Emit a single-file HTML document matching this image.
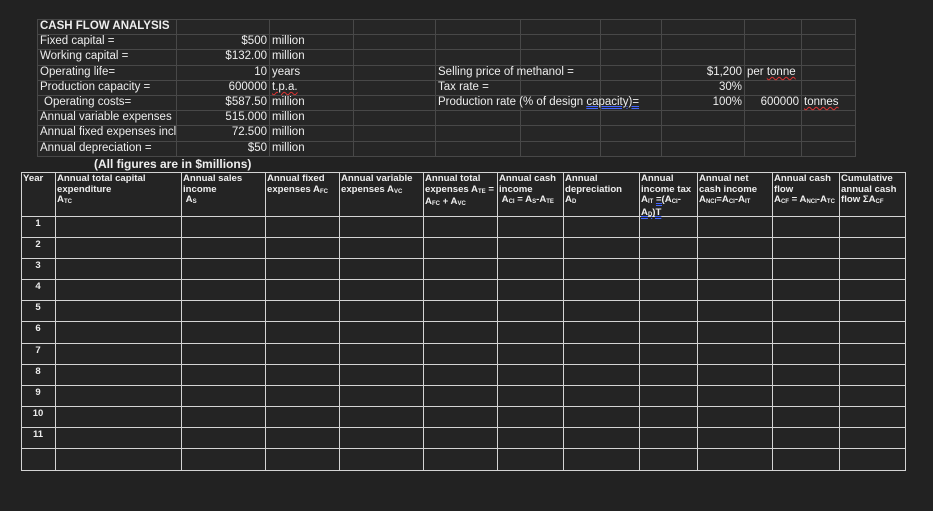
<!DOCTYPE html>
<html><head><meta charset="utf-8"><style>
body{margin:0;width:933px;height:511px;background:#222;position:relative;overflow:hidden;font-family:"Liberation Sans",Arial,sans-serif;color:#eee}
.v,.h{position:absolute;background:#484848}
.V,.H{position:absolute;background:#d4d4d4}
.t{position:absolute;font-size:11.5px;line-height:15px;white-space:nowrap}
.r{text-align:right}
.c{position:absolute;font-size:9.6px;line-height:10.5px;font-weight:bold;color:#eee;white-space:nowrap}
.n{position:absolute;font-size:9.5px;font-weight:bold;width:34px;text-align:center;left:21px}
sub{font-size:6px;vertical-align:-1px}
.u{text-decoration:underline wavy #d33;text-decoration-thickness:1px}
.b{text-decoration:underline double #46f}
</style></head><body>
<!-- top grid -->
<div style="position:absolute;left:37px;top:19px;width:818px;height:137px;background:#262626"></div>
<div class="v" style="left:37px;top:19px;width:1px;height:137px"></div>
<div class="v" style="left:176px;top:19px;width:1px;height:137px"></div>
<div class="v" style="left:269px;top:19px;width:1px;height:137px"></div>
<div class="v" style="left:353px;top:19px;width:1px;height:137px"></div>
<div class="v" style="left:435px;top:19px;width:1px;height:137px"></div>
<div class="v" style="left:520px;top:19px;width:1px;height:137px"></div>
<div class="v" style="left:600px;top:19px;width:1px;height:137px"></div>
<div class="v" style="left:661px;top:19px;width:1px;height:137px"></div>
<div class="v" style="left:744px;top:19px;width:1px;height:137px"></div>
<div class="v" style="left:801px;top:19px;width:1px;height:137px"></div>
<div class="v" style="left:855px;top:19px;width:1px;height:137px"></div>
<div class="h" style="left:37px;top:19px;width:819px;height:1px"></div>
<div class="h" style="left:37px;top:34px;width:819px;height:1px"></div>
<div class="h" style="left:37px;top:49px;width:819px;height:1px"></div>
<div class="h" style="left:37px;top:65px;width:819px;height:1px"></div>
<div class="h" style="left:37px;top:80px;width:819px;height:1px"></div>
<div class="h" style="left:37px;top:95px;width:819px;height:1px"></div>
<div class="h" style="left:37px;top:110px;width:819px;height:1px"></div>
<div class="h" style="left:37px;top:125px;width:819px;height:1px"></div>
<div class="h" style="left:37px;top:141px;width:819px;height:1px"></div>
<div class="h" style="left:37px;top:156px;width:819px;height:1px"></div>

<div class="t" style="left:40px;top:19px;font-weight:bold">CASH FLOW ANALYSIS</div>
<div class="t" style="left:40px;top:34px">Fixed capital =</div>
<div class="t" style="left:40px;top:49px">Working capital =</div>
<div class="t" style="left:40px;top:65px">Operating life=</div>
<div class="t" style="left:40px;top:80px">Production capacity =</div>
<div class="t" style="left:44px;top:95px">Operating costs=</div>
<div class="t" style="left:40px;top:110px">Annual variable expenses</div>
<div class="t" style="left:40px;top:125px">Annual fixed expenses incl</div>
<div class="t" style="left:40px;top:141px">Annual depreciation =</div>

<div class="t r" style="left:176px;width:91px;top:34px">$500</div>
<div class="t r" style="left:176px;width:91px;top:49px">$132.00</div>
<div class="t r" style="left:176px;width:91px;top:65px">10</div>
<div class="t r" style="left:176px;width:91px;top:80px">600000</div>
<div class="t r" style="left:176px;width:91px;top:95px">$587.50</div>
<div class="t r" style="left:176px;width:91px;top:110px">515.000</div>
<div class="t r" style="left:176px;width:91px;top:125px">72.500</div>
<div class="t r" style="left:176px;width:91px;top:141px">$50</div>

<div class="t" style="left:272px;top:34px">million</div>
<div class="t" style="left:272px;top:49px">million</div>
<div class="t" style="left:272px;top:65px">years</div>
<div class="t" style="left:272px;top:80px"><span class="u">t.p.a.</span></div>
<div class="t" style="left:272px;top:95px">million</div>
<div class="t" style="left:272px;top:110px">million</div>
<div class="t" style="left:272px;top:125px">million</div>
<div class="t" style="left:272px;top:141px">million</div>

<div class="t" style="left:438px;top:65px">Selling price of methanol =</div>
<div class="t" style="left:438px;top:80px">Tax rate =</div>
<div class="t" style="left:438px;top:95px">Production rate (% of design <span class="b">capacity)=</span></div>
<div class="t r" style="left:661px;width:81px;top:65px">$1,200</div>
<div class="t r" style="left:661px;width:81px;top:80px">30%</div>
<div class="t r" style="left:661px;width:81px;top:95px">100%</div>
<div class="t" style="left:747px;top:65px">per <span class="u">tonne</span></div>
<div class="t r" style="left:744px;width:55px;top:95px">600000</div>
<div class="t" style="left:804px;top:95px"><span class="u">tonnes</span></div>

<div class="t" style="left:94px;top:157px;font-weight:bold;font-size:12px">(All figures are in $millions)</div>

<!-- lower table -->
<div style="position:absolute;left:21px;top:172px;width:884px;height:298px;background:#242424"></div>
<div class="V" style="left:21px;top:172px;width:1px;height:299px"></div>
<div class="V" style="left:55px;top:172px;width:1px;height:299px"></div>
<div class="V" style="left:181px;top:172px;width:1px;height:299px"></div>
<div class="V" style="left:265px;top:172px;width:1px;height:299px"></div>
<div class="V" style="left:339px;top:172px;width:1px;height:299px"></div>
<div class="V" style="left:423px;top:172px;width:1px;height:299px"></div>
<div class="V" style="left:497px;top:172px;width:1px;height:299px"></div>
<div class="V" style="left:563px;top:172px;width:1px;height:299px"></div>
<div class="V" style="left:639px;top:172px;width:1px;height:299px"></div>
<div class="V" style="left:697px;top:172px;width:1px;height:299px"></div>
<div class="V" style="left:772px;top:172px;width:1px;height:299px"></div>
<div class="V" style="left:839px;top:172px;width:1px;height:299px"></div>
<div class="V" style="left:905px;top:172px;width:1px;height:299px"></div>
<div class="H" style="left:21px;top:172px;width:885px;height:1px"></div>
<div class="H" style="left:21px;top:216px;width:885px;height:1px"></div>
<div class="H" style="left:21px;top:237px;width:885px;height:1px"></div>
<div class="H" style="left:21px;top:258px;width:885px;height:1px"></div>
<div class="H" style="left:21px;top:279px;width:885px;height:1px"></div>
<div class="H" style="left:21px;top:300px;width:885px;height:1px"></div>
<div class="H" style="left:21px;top:321px;width:885px;height:1px"></div>
<div class="H" style="left:21px;top:343px;width:885px;height:1px"></div>
<div class="H" style="left:21px;top:364px;width:885px;height:1px"></div>
<div class="H" style="left:21px;top:385px;width:885px;height:1px"></div>
<div class="H" style="left:21px;top:406px;width:885px;height:1px"></div>
<div class="H" style="left:21px;top:427px;width:885px;height:1px"></div>
<div class="H" style="left:21px;top:448px;width:885px;height:1px"></div>
<div class="H" style="left:21px;top:470px;width:885px;height:1px"></div>

<div class="c" style="left:23px;top:174px">Year</div>
<div class="c" style="left:57px;top:174px">Annual total capital<br>expenditure<br>A<sub>TC</sub></div>
<div class="c" style="left:183px;top:174px">Annual sales<br>income<br>&nbsp;A<sub>S</sub></div>
<div class="c" style="left:267px;top:174px">Annual fixed<br>expenses A<sub>FC</sub></div>
<div class="c" style="left:341px;top:174px">Annual variable<br>expenses A<sub>VC</sub></div>
<div class="c" style="left:425px;top:174px">Annual total<br>expenses A<sub>TE</sub> =<br>A<sub>FC</sub> + A<sub>VC</sub></div>
<div class="c" style="left:499px;top:174px">Annual cash<br>income<br>&nbsp;A<sub>CI</sub> = A<sub>S</sub>-A<sub>TE</sub></div>
<div class="c" style="left:565px;top:174px">Annual<br>depreciation<br>A<sub>D</sub></div>
<div class="c" style="left:641px;top:174px">Annual<br>income tax<br>A<sub>IT</sub> <span class="b">=(</span>A<sub>CI</sub>-<br><span class="b">A<sub>D</sub>)T</span></div>
<div class="c" style="left:699px;top:174px">Annual net<br>cash income<br>A<sub>NCI</sub>=A<sub>CI</sub>-A<sub>IT</sub></div>
<div class="c" style="left:774px;top:174px">Annual cash<br>flow<br>A<sub>CF</sub> = A<sub>NCI</sub>-A<sub>TC</sub></div>
<div class="c" style="left:841px;top:174px">Cumulative<br>annual cash<br>flow &Sigma;A<sub>CF</sub></div>

<div class="n" style="top:218px">1</div>
<div class="n" style="top:239px">2</div>
<div class="n" style="top:260px">3</div>
<div class="n" style="top:281px">4</div>
<div class="n" style="top:302px">5</div>
<div class="n" style="top:323px">6</div>
<div class="n" style="top:345px">7</div>
<div class="n" style="top:366px">8</div>
<div class="n" style="top:387px">9</div>
<div class="n" style="top:408px">10</div>
<div class="n" style="top:429px">11</div>
</body></html>
